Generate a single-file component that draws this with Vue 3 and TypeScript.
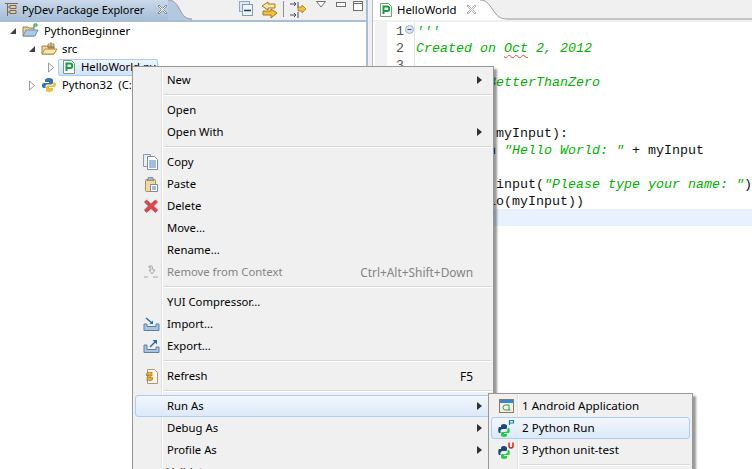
<script setup lang="ts">
interface Item { label?: string; sep?: boolean; icon?: string; arrow?: boolean; key?: string; disabled?: boolean; active?: boolean }
const menu: Item[] = [
  { label: 'New', arrow: true },
  { sep: true },
  { label: 'Open' },
  { label: 'Open With', arrow: true },
  { sep: true },
  { label: 'Copy', icon: 'copy' },
  { label: 'Paste', icon: 'paste' },
  { label: 'Delete', icon: 'delete' },
  { label: 'Move...' },
  { label: 'Rename...' },
  { label: 'Remove from Context', icon: 'remove', key: 'Ctrl+Alt+Shift+Down', disabled: true },
  { sep: true },
  { label: 'YUI Compressor...' },
  { label: 'Import...', icon: 'import' },
  { label: 'Export...', icon: 'export' },
  { sep: true },
  { label: 'Refresh', icon: 'refresh', key: 'F5' },
  { sep: true },
  { label: 'Run As', arrow: true, active: true },
  { label: 'Debug As', arrow: true },
  { label: 'Profile As', arrow: true },
  { label: 'Validate' }
]
const sub: Item[] = [
  { label: '1 Android Application', icon: 'android' },
  { label: '2 Python Run', icon: 'pyrun', active: true },
  { label: '3 Python unit-test', icon: 'pyunit' },
  { sep: true }
]
const lines = [
  { n: 1, html: `<span class="c">'''</span>` },
  { n: 2, html: `<span class="c">Created on <u>Oct</u> 2, 2012</span>` },
  { n: 3, html: '' },
  { n: 4, html: `<span class="c">@author: BetterThanZero</span>` },
  { n: 5, html: `<span class="c">'''</span>` },
  { n: 6, html: '' },
  { n: 7, html: `def hello(myInput):` },
  { n: 8, html: `    return <span class="s">"Hello World: "</span> + myInput` },
  { n: 9, html: '' },
  { n: 10, html: `myInput = input(<span class="s">"Please type your name: "</span>)` },
  { n: 11, html: `print(hello(myInput))` },
  { n: 12, html: '' }
]
</script>

<template>
  <div class="app">
    <section class="view left">
      <header class="head">
        <div class="tab active">
          <svg class="ic" width="13" height="16" viewBox="0 0 13 16"><path d="M2.500 1v13M0 1.500h13" stroke="#7a6a58" fill="none"/><path d="M5 3.500h6v3H5zM5 8.500h6v3H5z" fill="#e4cfa0" stroke="#7a5a38" stroke-width=".9"/><path d="M2.500 5h2.500M2.500 10h2.500" stroke="#7a6a58"/></svg>
          <span class="ttl">PyDev Package Explorer</span>
          <svg class="x" width="11" height="11" viewBox="0 0 11 11"><path d="M2 1l3.500 3.500L9 1l1 1-3.500 3.500L10 9l-1 1-3.500-3.500L2 10l-1-1 3.500-3.500L1 2z" fill="#fff" stroke="#778" stroke-width=".8"/></svg>
        </div>
        <svg class="curve" width="24" height="20" viewBox="0 0 24 20"><path d="M0 0C6 0 9 4 12 10S18 19 24 19V20H0Z" fill="#b4c8df"/><path d="M0 0C6 0 9 4 12 10S18 19 24 19" fill="none" stroke="#9a9a9a"/></svg>
        <div class="tools">
          <svg width="16" height="16" viewBox="0 0 16 16"><rect x=".5" y=".5" width="10" height="10" fill="#dfe8f2" stroke="#8fa6bd"/><rect x="3.500" y="3.500" width="10" height="11" fill="#eef4fa" stroke="#7f9bb8"/><path d="M5 9.500h7" stroke="#1f3f70" stroke-width="1.500"/></svg>
          <svg width="17" height="18" viewBox="0 0 17 18"><path d="M7 1L1 5l6 4V7h7V3H7z" fill="#f8e8a8" stroke="#a87810"/><path d="M10 8l6 4-6 5v-3H2v-4h8z" fill="#f0c040" stroke="#a87810"/></svg>
          <span class="tsep"></span>
          <svg width="18" height="18" viewBox="0 0 18 18"><path d="M1 3h6M5 1l2 2-2 2M1 14h6M5 12l2 2-2 2M9 1v6M9 11v6" stroke="#444c58" fill="none"/><path d="M9 6h4V4l4 4-4 4v-2H9z" fill="#f0c040" stroke="#a87810" stroke-width=".8"/></svg>
          <svg class="tri" width="11" height="8" viewBox="0 0 11 8"><path d="M.5.500h9L5 6z" fill="#fff" stroke="#707070"/></svg>
          <svg class="min" width="10" height="5" viewBox="0 0 10 5"><rect x=".5" y=".5" width="9" height="4" fill="#fff" stroke="#707070"/></svg>
          <svg class="max" width="10" height="11" viewBox="0 0 10 11"><rect x=".5" y=".5" width="9" height="9" fill="#fff" stroke="#707070"/><path d="M0 2.500h10" stroke="#707070"/></svg>
        </div>
      </header>
      <div class="tree">
        <div class="row" style="--lvl:0">
          <svg class="exp" width="9" height="9" viewBox="0 0 9 9"><path d="M7 1v6H1z" fill="#404040"/></svg>
          <svg class="ic" width="18" height="16" viewBox="0 0 18 16"><path d="M1 4h5l1 1h5v8H1z" fill="#f0d090" stroke="#a08040"/><path d="M1 13l3-6h12l-3 6z" fill="#a9cbea" stroke="#6a92b6"/><path d="M12 1v4M12 1h3v2h-3" stroke="#1a9a30" fill="none"/></svg>
          <span>PythonBeginner</span>
        </div>
        <div class="row" style="--lvl:1">
          <svg class="exp" width="9" height="9" viewBox="0 0 9 9"><path d="M7 1v6H1z" fill="#404040"/></svg>
          <svg class="ic" width="18" height="16" viewBox="0 0 18 16"><path d="M1 5h5l1 1h6v7H1z" fill="#f4d89a" stroke="#a08040"/><path d="M1 13l3-5h12l-3 5z" fill="#fbe6b0" stroke="#b08a40"/><path d="M7 3h6v4H7zM10 1v6M7 5h6" fill="none" stroke="#8a6a30" stroke-width=".8"/></svg>
          <span>src</span>
        </div>
        <div class="row" style="--lvl:2">
          <svg class="exp open" width="9" height="11" viewBox="0 0 9 11"><path d="M1.500 1l5 4.500-5 4.500z" fill="#fff" stroke="#999"/></svg>
          <div class="sel">
            <svg class="ic" width="14" height="16" viewBox="0 0 14 16"><path d="M1.500 1.500h8l3 3v10h-11z" fill="#fff" stroke="#7a9a7a"/><path d="M4.500 12V4.500h3.500a2 2 0 010 4.500H4.500" fill="none" stroke="#10a040" stroke-width="2"/></svg>
            <span>HelloWorld.py</span>
          </div>
        </div>
        <div class="row" style="--lvl:1">
          <svg class="exp open" width="9" height="11" viewBox="0 0 9 11"><path d="M1.500 1l5 4.500-5 4.500z" fill="#fff" stroke="#999"/></svg>
          <svg class="ic" width="16" height="16" viewBox="0 0 16 16"><path d="M8 1c-3 0-4 1-4 2.500V5h4v1H3C1.500 6 1 7 1 8.500S1.500 11 3 11h1.500V9.500C4.500 8 5.500 7.500 7 7.500h3c1.300 0 2-.8 2-2V3.500C12 2 11 1 8 1z" fill="#3a70a8"/><path d="M8 15c3 0 4-1 4-2.500V11H8v-1h5c1.500 0 2-1 2-2.500S14.500 5 13 5h-.5v1.500c0 1.500-1 2-2.500 2H7c-1.300 0-2 .8-2 2v2C5 14 5 15 8 15z" fill="#e8c040"/></svg>
          <span>Python32&nbsp; (C:\Python32\python.exe)</span>
        </div>
      </div>
    </section>

    <section class="view right">
      <header class="head ehead">
        <div class="tab etab">
          <svg class="ic" width="14" height="16" viewBox="0 0 14 16"><path d="M1.500 1.500h8l3 3v10h-11z" fill="#fff" stroke="#7a9a7a"/><path d="M4.500 12V4.500h3.500a2 2 0 010 4.500H4.500" fill="none" stroke="#10a040" stroke-width="2"/></svg>
          <span class="ettl">HelloWorld</span>
          <svg class="x" width="11" height="11" viewBox="0 0 11 11"><path d="M2 1l3.500 3.500L9 1l1 1-3.500 3.500L10 9l-1 1-3.500-3.500L2 10l-1-1 3.500-3.500L1 2z" fill="#fff" stroke="#999" stroke-width=".8"/></svg>
        </div>
        <svg class="curve" width="27" height="20" viewBox="0 0 27 20"><path d="M0 0C6 0 9 4 13 10S20 19 27 19V20H0Z" fill="#fff"/><path d="M0 0C6 0 9 4 13 10S20 19 27 19H282" fill="none" stroke="#9a9a9a"/></svg>
        <div class="eline"></div>
      </header>
      <div class="code">
        <div v-for="l in lines" :key="l.n" class="line" :class="{ cur: l.n === 12 }">
          <div class="num"><span class="nt">{{ l.n }}</span><svg v-if="l.n === 1" class="fold" width="9" height="9" viewBox="0 0 9 9"><circle cx="4.500" cy="4.500" r="4" fill="#dbe6f2" stroke="#9ab0c6"/><path d="M2.500 4.500h4" stroke="#456"/></svg></div>
          <div class="txt" v-html="l.html"></div>
        </div>
      </div>
    </section>

    <div class="menu main">
      <template v-for="(m, i) in menu" :key="i">
        <div v-if="m.sep" class="sep"></div>
        <div v-else class="item" :class="{ dis: m.disabled, act: m.active }">
          <span class="mi">
            <svg v-if="m.icon === 'copy'" width="16" height="16" viewBox="0 0 16 16"><path d="M.5.500h7v12h-7z" fill="#e8eef6" stroke="#8a9ab0"/><path d="M4.500 2.500h7l3 3v10h-10z" fill="#fff" stroke="#7a8aa0"/><path d="M6 7h7M6 9h7M6 11h7M6 13h7" stroke="#4a78b8"/></svg>
            <svg v-if="m.icon === 'paste'" width="15" height="17" viewBox="0 0 15 17"><rect x="1.500" y="3.500" width="10" height="12" rx="1" fill="#f0d8a0" stroke="#b09050"/><path d="M4 3.500V1.500h5v2h1v1H3v-1z" fill="#a8b4c4" stroke="#6a7a90" stroke-width=".7"/><path d="M6.500 8.500h7v7h-7z" fill="#fff" stroke="#7a8aa0"/><path d="M8 11h4M8 13h4" stroke="#4a78b8"/></svg>
            <svg v-if="m.icon === 'delete'" width="14" height="14" viewBox="0 0 14 14"><path d="M2.500 1L7 5l4.500-4L13.500 3 9.500 7l4 4-2 2.500L7 9.500 2.500 13.500.5 11l4-4-4-4z" fill="#e0454c" stroke="#c03038" stroke-width=".7"/></svg>
            <svg v-if="m.icon === 'remove'" width="16" height="14" viewBox="0 0 16 14"><path d="M6 1h3l1 4h2l-3 4-3-4h2L7.500 2.500H6zM1 12h4M10 12h5" stroke="#a8a8a8" fill="none"/></svg>
            <svg v-if="m.icon === 'import'" width="17" height="15" viewBox="0 0 17 15"><path d="M3 1l6 5" stroke="#2a6ab0" stroke-width="1.500"/><path d="M10 7H6.500L10 3.500z" fill="#2a6ab0"/><path d="M1 7v6.500h15V7h-3v2.500H4V7z" fill="#a8c4e4" stroke="#5a80a8"/></svg>
            <svg v-if="m.icon === 'export'" width="17" height="15" viewBox="0 0 17 15"><path d="M7 8l6-6" stroke="#2a6ab0" stroke-width="1.500"/><path d="M9.500 1H14v4.500z" fill="#2a6ab0"/><path d="M1 6v7.500h15V8h-3v2.500H4V6z" fill="#a8c4e4" stroke="#5a80a8"/></svg>
            <svg v-if="m.icon === 'refresh'" width="15" height="15" viewBox="0 0 15 15"><path d="M3.500 .5h7l3 3v11h-10z" fill="#fbf6e8" stroke="#a89a80"/><path d="M2 6a3 3 0 015-2l1-1v4H4l1-1a1.500 1.500 0 00-2 1zM9 9a3 3 0 01-5 2l-1 1V8h4l-1 1a1.500 1.500 0 002-.5z" fill="#e8b030" stroke="#906810" stroke-width=".6"/></svg>
          </span>
          <span class="lbl">{{ m.label }}</span>
          <span v-if="m.key" class="key">{{ m.key }}</span>
          <span v-if="m.arrow" class="arr"></span>
        </div>
      </template>
    </div>

    <div class="menu submenu">
      <template v-for="(m, i) in sub" :key="i">
        <div v-if="m.sep" class="sep"></div>
        <div v-else class="item" :class="{ act: m.active }">
          <span class="mi">
            <svg v-if="m.icon === 'android'" width="15" height="14" viewBox="0 0 15 14"><rect x=".5" y=".5" width="14" height="13" fill="#f4f0e4" stroke="#8a7a60"/><rect x="1" y="1" width="13" height="3" fill="#3a88c8"/><path d="M10 6H6.500a2 2 0 000 5H10V6M10 11h1.500" fill="none" stroke="#2a9a5a"/></svg>
            <svg v-else width="17" height="17" viewBox="0 0 17 17"><path d="M6 4C3.500 4 3 5 3 6v1H1C0 8 0 12 1 13h1.500v-2c0-1 1-2 2-2h3c1 0 1.500-.7 1.500-1.500V6C9 5 8 4 6 4z" fill="#1a4a78"/><path d="M6 17c2.500 0 3-1 3-2v-1H6v-1h5c1-1 1-4 0-5H9.500v2c0 1-1 2-2 2h-3C3.500 12 3 12.700 3 13.500V15c0 1 1 2 3 2z" fill="#20d040"/><path v-if="m.icon === 'pyrun'" d="M11.500 5V.5h4v2.500h-4" fill="none" stroke="#108888" stroke-width="1.200"/><path v-else d="M11 .5v3.500a2 2 0 004 0V.5" fill="none" stroke="#e02020" stroke-width="1.500"/></svg>
          </span>
          <span class="lbl">{{ m.label }}</span>
          <span v-if="m.arrow" class="arr"></span>
        </div>
      </template>
    </div>
  </div>
</template>

<style>
body { margin: 0; background: #fff; }
</style>

<style scoped>
.app {
  position: relative;
  width: 752px;
  height: 469px;
  overflow: hidden;
  display: flex;
  gap: 4px;
  background: #f0f0f0;
  font: 11.3px/16px "Noto Sans", "Open Sans", sans-serif;
  color: #000;
}
.view { display: flex; flex-direction: column; height: 100%; }
.left { width: 368px; flex: none; border-right: 2px solid #a9bdd4; box-sizing: border-box; }
.right { flex: 1; min-width: 0; border-left: 1px solid #b8b8b8; }
.head { display: flex; height: 22px; background: #f0f0f0; flex: none; position: relative; }
.left .head { border-bottom: 2px solid #a9bdd4; box-sizing: border-box; }
.tab { display: flex; align-items: center; gap: 4px; height: 20px; padding-left: 5px; white-space: nowrap; box-sizing: border-box; flex: none; }
.tab.active { width: 168px; background: linear-gradient(#cbd9ea, #a9c0da 90%); }
.ttl { width: 128px; font-size: 10.9px; letter-spacing: -.02px; }
.ettl { width: 59px; font-size: 11.4px; }
.etab { padding: 0 3px 0 6px; background: #fff; }
.curve { flex: none; overflow: visible; }
.ic { flex: none; }
.x { flex: none; margin-left: 6px; margin-top: -2px; }
.tools { display: flex; align-items: flex-start; margin-left: 47px; padding-top: 1px; }
.tools > :nth-child(2) { margin-left: 6px; }
.tsep { width: 1px; height: 16px; background: #909090; margin-left: 5px; }
.tools > :nth-child(4) { margin-left: 5px; }
.tri { margin-left: 9px; }
.min { margin: 1px 0 0 9px; }
.max { margin: 0 0 0 7px; }
.eline { flex: 1; }
.tree { flex: 1; background: #fff; }
.row {
  height: 18px;
  display: flex;
  align-items: center;
  gap: 4px;
  padding-left: calc(9px + var(--lvl) * 19px);
  white-space: nowrap;
}
.row:nth-child(2) > span { margin-left: -1px; }
.row:nth-child(4) > span { margin-left: 1px; }
.exp { flex: none; width: 9px; }
.sel {
  display: flex;
  align-items: center;
  gap: 5px;
  height: 17px;
  width: 100px;
  margin-left: -2px;
  padding: 0 3px;
  border: 1px solid #a8cdf0;
  border-radius: 2px;
  box-sizing: border-box;
  background: linear-gradient(#eef5fc, #cfe3f7);
}
.code { flex: 1; background: #fff; font: 13.33px/17px "Liberation Mono", monospace; }
.line { display: flex; height: 17px; }
.num { width: 42px; flex: none; position: relative; background: linear-gradient(90deg, #fff 0 2px, #f2f2f2 2px 14px, #fff 14px); padding-left: 23px; box-sizing: border-box; color: #555; border-right: 1px solid #e4e4e4; font-size: 13.33px; }
.nt { position: relative; top: 1px; }
.fold { position: absolute; left: 32px; top: 3px; }
.txt { white-space: pre; padding-left: 1px; color: #111; position: relative; top: 1px; }
.txt :deep(.c), .txt :deep(.s) { color: #00b400; font-style: italic; }
.txt :deep(u) { text-decoration: underline wavy #e05030 1px; text-underline-offset: 2px; }
.cur { background: #e8f2fe; }

.menu {
  position: absolute;
  box-sizing: border-box;
  background: linear-gradient(90deg, #f0f0f0 0 28px, #e2e2e2 28px 29px, #fff 29px 30px, #f0f0f0 30px);
  border: 1px solid #979797;
  box-shadow: 3px 3px 2px rgba(0, 0, 0, .4);
  padding: 2px;
  color: #000;
}
.main { left: 132px; top: 66px; width: 362px; height: 440px; }
.submenu { left: 488px; top: 393px; width: 205px; height: 90px; padding-top: 1px; font-size: 11.6px; }
.item { position: relative; height: 22px; display: flex; align-items: center; box-sizing: border-box; border: 1px solid transparent; border-radius: 3px; white-space: nowrap; }
.act { border-color: #aeccf0; background: linear-gradient(#f2f7fd, #dce9f8); }
.mi { width: 31px; flex: none; display: flex; justify-content: center; padding-right: 1px; box-sizing: border-box; }
.submenu .mi { width: 30px; }
.lbl { flex: 1; }
.dis { color: #848484; }
.key { padding-right: 17px; font-size: 11.9px; }
.arr { position: absolute; right: 8px; top: 6px; width: 0; height: 0; border-left: 5px solid #303030; border-top: 4px solid transparent; border-bottom: 4px solid transparent; }
.sep { height: 8px; position: relative; }
.sep::after { content: ""; position: absolute; left: 29px; right: 0; top: 3px; height: 1px; background: #d8d8d8; box-shadow: 0 1px 0 #fff; }
</style>
